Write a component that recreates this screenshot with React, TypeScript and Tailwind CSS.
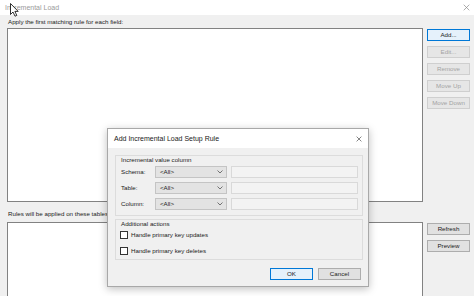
import React from "react";

const font = { fontFamily: '"Liberation Sans", Arial, sans-serif' };

function WinButton({
  label,
  disabled,
  focused,
}: {
  label: string;
  disabled?: boolean;
  focused?: boolean;
}) {
  return (
    <div
      className={
        "flex h-[12px] w-[43px] shrink-0 items-center justify-center border text-[6.2px] leading-[8px] " +
        (focused
          ? "border-[#0078d7] bg-[#e5f1fb] text-[#1a1a1a]"
          : disabled
          ? "border-[#cfcfcf] bg-[#e6e6e6] text-[#a3a3a3]"
          : "border-[#adadad] bg-[#e1e1e1] text-[#1a1a1a]")
      }
    >
      {label}
    </div>
  );
}

function XIcon({ size, color }: { size: number; color: string }) {
  return (
    <svg width={size} height={size} viewBox="0 0 10 10">
      <path d="M1 1 L9 9 M9 1 L1 9" stroke={color} strokeWidth="1" fill="none" />
    </svg>
  );
}

function Combo() {
  return (
    <div className="flex h-[12px] w-[72px] shrink-0 items-center justify-between border border-[#c4c4c4] bg-[#e3e3e3] pl-[4px] pr-[3px] text-[6.2px] leading-[8px] text-[#1a1a1a]">
      <span>&lt;All&gt;</span>
      <svg width="6" height="4" viewBox="0 0 6 4">
        <path d="M0.5 0.5 L3 3 L5.5 0.5" stroke="#555" strokeWidth="0.8" fill="none" />
      </svg>
    </div>
  );
}

function FieldRow({ label }: { label: string }) {
  return (
    <div className="flex h-[12px] shrink-0 items-center">
      <div className="w-[34px] shrink-0 text-[6.2px] leading-[8px] text-[#1a1a1a]">{label}</div>
      <Combo />
      <div className="ml-[4px] h-[12px] w-[127px] shrink-0 border border-[#d9d9d9] bg-[#f3f3f3]" />
    </div>
  );
}

function Check({ label }: { label: string }) {
  return (
    <div className="flex h-[8px] shrink-0 items-center">
      <div className="h-[8px] w-[8px] shrink-0 border border-[#333] bg-white" />
      <span className="ml-[3px] text-[6.2px] leading-[8px] text-[#1a1a1a]">{label}</span>
    </div>
  );
}

export default function App() {
  return (
    <div className="relative h-[296px] w-[474px] overflow-hidden bg-[#f0f0f0]" style={font}>
      {/* Main window */}
      <div className="flex h-full flex-col">
        <div className="flex h-[15px] shrink-0 items-center justify-between bg-white pl-[5px] pr-[4px]">
          <span className="text-[7px] leading-[9px] text-[#9a9a9a]">Incremental Load</span>
          <XIcon size={7} color="#8a8a8a" />
        </div>
        <div className="flex min-h-0 flex-1 pl-[7px]">
          <div className="flex w-[416px] shrink-0 flex-col">
            <div className="flex h-[13px] shrink-0 items-center pl-[1px] text-[6.2px] leading-[8px] text-[#1a1a1a]">
              Apply the first matching rule for each field:
            </div>
            <div className="h-[174px] shrink-0 border border-[#828282] bg-white" />
            <div className="flex h-[20px] shrink-0 items-end pb-[4px] pl-[1px] text-[6.2px] leading-[8px] text-[#1a1a1a]">
              Rules will be applied on these tables:
            </div>
            <div className="h-[90px] shrink-0 border border-[#828282] bg-white" />
          </div>
          <div className="ml-[4px] flex shrink-0 flex-col pt-[14px]">
            <div className="flex flex-col gap-[5px]">
              <WinButton label="Add..." focused />
              <WinButton label="Edit..." disabled />
              <WinButton label="Remove" disabled />
              <WinButton label="Move Up" disabled />
              <WinButton label="Move Down" disabled />
            </div>
            <div className="mt-[114px] flex flex-col gap-[5px]">
              <WinButton label="Refresh" />
              <WinButton label="Preview" />
            </div>
          </div>
        </div>
      </div>

      {/* Modal dialog */}
      <div className="absolute left-[107px] top-[128px] flex h-[159px] w-[262px] flex-col border border-[#a8a8a8] bg-[#f0f0f0] shadow-[0_2px_8px_rgba(0,0,0,0.25)]">
        <div className="flex h-[19px] shrink-0 items-center justify-between bg-white pl-[6px] pr-[6px]">
          <span className="text-[7px] leading-[9px] text-[#1a1a1a]">Add Incremental Load Setup Rule</span>
          <XIcon size={6} color="#333" />
        </div>
        <div className="flex flex-1 flex-col pl-[7px] pr-[5px] pt-[7px]">
          <div className="flex h-[61px] shrink-0 flex-col border border-[#dcdcdc] pl-[5px]">
            <div className="h-[8px] shrink-0 text-[6.2px] leading-[8px] text-[#1a1a1a]">Incremental value column</div>
            <div className="mt-[2px] flex flex-col gap-[4px]">
              <FieldRow label="Schema:" />
              <FieldRow label="Table:" />
              <FieldRow label="Column:" />
            </div>
          </div>
          <div className="mt-[3px] flex h-[41px] shrink-0 flex-col border border-[#dcdcdc] pl-[4px]">
            <div className="ml-[1px] h-[8px] shrink-0 text-[6.2px] leading-[8px] text-[#1a1a1a]">Additional actions</div>
            <div className="mt-[3px] flex flex-col gap-[8px]">
              <Check label="Handle primary key updates" />
              <Check label="Handle primary key deletes" />
            </div>
          </div>
          <div className="mt-[8px] flex shrink-0 justify-end gap-[5px] pr-[2px]">
            <WinButton label="OK" focused />
            <WinButton label="Cancel" />
          </div>
        </div>
      </div>

      {/* Mouse cursor */}
      <svg className="absolute left-[10px] top-[3px]" width="9" height="14" viewBox="0 0 9 14">
        <path
          d="M0.5 0.5 L0.5 11.5 L3 9 L5 13.2 L6.8 12.4 L4.9 8.4 L8.2 8.4 Z"
          fill="white"
          stroke="black"
          strokeWidth="0.8"
          strokeLinejoin="round"
        />
      </svg>
    </div>
  );
}
